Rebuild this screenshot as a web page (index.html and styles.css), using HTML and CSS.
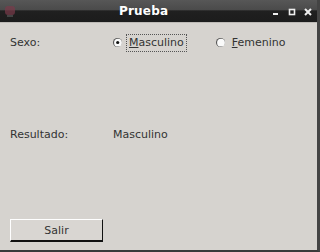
FILE: index.html
```html
<!DOCTYPE html>
<html lang="es">
<head>
    <meta charset="UTF-8">
    <title>Prueba</title>
    <link rel="stylesheet" href="styles.css">
</head>
<body>
    <div class="window">
        <div class="titlebar">
            <svg class="app-icon" width="12" height="12" viewBox="0 0 12 12">
                <rect x="1" y="1" width="10" height="9" rx="3" fill="#7a3a4a" opacity="0.7"/>
                <rect x="3" y="10" width="6" height="2" fill="#444"/>
            </svg>
            <span class="title">Prueba</span>
            <div class="controls">
                <svg width="8" height="8" viewBox="0 0 8 8"><rect x="1" y="5" width="5" height="2" fill="#eee"/></svg>
                <svg width="8" height="8" viewBox="0 0 8 8"><rect x="1.5" y="1.5" width="5" height="5" fill="none" stroke="#eee" stroke-width="1.6"/></svg>
                <svg width="8" height="8" viewBox="0 0 8 8"><path d="M1 1 L7 7 M7 1 L1 7" stroke="#eee" stroke-width="2"/></svg>
            </div>
        </div>

        <div class="content">
            <div class="row">
                <span class="label">Sexo:</span>
                <label class="radio">
                    <svg width="9" height="9" viewBox="0 0 9 9">
                        <circle cx="4.5" cy="4.5" r="4.5" fill="#555"/>
                        <circle cx="5" cy="4.7" r="3.9" fill="#fafafa"/>
                        <circle cx="4.7" cy="4.5" r="1.6" fill="#111"/>
                    </svg>
                    <span class="focus"><u>M</u>asculino</span>
                </label>
                <label class="radio second">
                    <svg width="9" height="9" viewBox="0 0 9 9">
                        <circle cx="4.5" cy="4.5" r="4.5" fill="#555"/>
                        <circle cx="5" cy="4.7" r="3.9" fill="#fafafa"/>
                    </svg>
                    <span class="text"><u>F</u>emenino</span>
                </label>
            </div>

            <div class="row result">
                <span class="label">Resultado:</span>
                <span class="value">Masculino</span>
            </div>

            <button class="btn">Salir</button>
        </div>
    </div>
</body>
</html>
```

FILE: styles.css
```css
* {
    box-sizing: border-box;
    margin: 0;
    padding: 0;
}

body {
    font-family: 'DejaVu Sans', sans-serif;
    font-size: 11px;
    color: #333;
    background: #d6d3cf;
}

.window {
    width: 320px;
    height: 252px;
    display: flex;
    flex-direction: column;
    background: #d6d3cf;
    border-right: 3px solid #444;
    border-bottom: 2px solid #3a3a3a;
}

.titlebar {
    height: 23px;
    display: flex;
    align-items: center;
    background: linear-gradient(#575757 0%, #4a4a4a 45%, #202020 46%, #1c1c1c 95%, #bdbab6 96%);
    color: #fff;
    padding: 0 0 1px 4px;
}

.app-icon {
    flex: none;
}

.title {
    font-weight: bold;
    font-size: 12px;
    margin-left: 103px;
    letter-spacing: 0.2px;
}

.controls {
    margin-left: auto;
    display: flex;
    gap: 8px;
    padding-right: 5px;
    padding-top: 2px;
}

.content {
    flex: 1;
    display: flex;
    flex-direction: column;
    align-items: flex-start;
    padding: 10px 0 0 10px;
}

.row {
    display: flex;
    align-items: center;
    height: 19px;
}

.label {
    width: 103px;
}

.radio {
    display: flex;
    align-items: center;
}

.radio svg {
    margin-right: 5px;
}

.focus {
    border: 1px dotted #555;
    padding: 1px 2px 2px 2px;
    margin-left: -1px;
}

.second {
    margin-left: 29px;
}

.second .text {
    margin-left: 2px;
}

.result {
    margin-top: 73px;
}

.btn {
    margin-top: 75px;
    width: 93px;
    height: 23px;
    font-family: 'DejaVu Sans', sans-serif;
    font-size: 11px;
    color: #333;
    background: #d9d6d2;
    border: 1px solid;
    border-color: #fff #111 #111 #fff;
    border-bottom-width: 2px;
}
```
